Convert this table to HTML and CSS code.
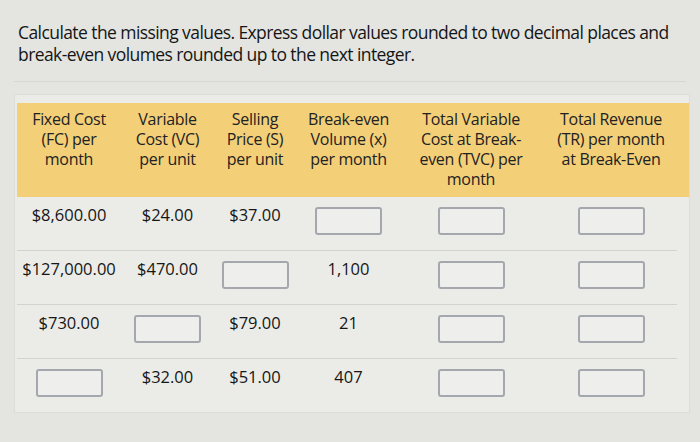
FILE: index.html
```html
<!DOCTYPE html>
<html>
<head>
<meta charset="utf-8">
<link rel="stylesheet" href="styles.css">
</head>
<body>
<div class="page">
  <p class="intro">Calculate the missing values. Express dollar values rounded to two decimal places and break-even volumes rounded up to the next integer.</p>
  <div class="rule"></div>
  <div class="panel">
    <div class="grid head">
      <div class="hc">Fixed Cost<br>(FC) per<br>month</div>
      <div class="hc">Variable<br>Cost (VC)<br>per unit</div>
      <div class="hc">Selling<br>Price (S)<br>per unit</div>
      <div class="hc">Break-even<br>Volume (x)<br>per month</div>
      <div class="hc">Total Variable<br>Cost at Break-<br>even (TVC) per<br>month</div>
      <div class="hc">Total Revenue<br>(TR) per month<br>at Break-Even</div>
    </div>
    <div class="grid row">
      <div class="c">$8,600.00</div>
      <div class="c">$24.00</div>
      <div class="c">$37.00</div>
      <div class="c"><input class="box" type="text"></div>
      <div class="c"><input class="box" type="text"></div>
      <div class="c"><input class="box" type="text"></div>
    </div>
    <div class="grid row">
      <div class="c">$127,000.00</div>
      <div class="c">$470.00</div>
      <div class="c"><input class="box" type="text"></div>
      <div class="c">1,100</div>
      <div class="c"><input class="box" type="text"></div>
      <div class="c"><input class="box" type="text"></div>
    </div>
    <div class="grid row">
      <div class="c">$730.00</div>
      <div class="c"><input class="box" type="text"></div>
      <div class="c">$79.00</div>
      <div class="c">21</div>
      <div class="c"><input class="box" type="text"></div>
      <div class="c"><input class="box" type="text"></div>
    </div>
    <div class="grid row last">
      <div class="c"><input class="box" type="text"></div>
      <div class="c">$32.00</div>
      <div class="c">$51.00</div>
      <div class="c">407</div>
      <div class="c"><input class="box" type="text"></div>
      <div class="c"><input class="box" type="text"></div>
    </div>
  </div>
</div>
</body>
</html>
```
FILE: styles.css
```css
html, body {
  margin: 0;
  padding: 0;
}
body {
  background: #e4e5e1;
  font-family: "Open Sans", "Noto Sans", sans-serif;
  color: #1a1a1a;
  width: 700px;
  height: 442px;
  overflow: hidden;
}
.page {
  padding: 21px 0 0 18px;
}
.intro {
  margin: 0;
  width: 670px;
  font-size: 17.5px;
  line-height: 22px;
  letter-spacing: -0.58px;
  color: #151515;
}
.rule {
  margin: 16px 14px 0 -4px;
  height: 1px;
  background: #d6d7d3;
}
.panel {
  margin: 12px 0 0 -4px;
  width: 672px;
  background: #ebece8;
  border: 1px solid #dcddd9;
  padding: 8px 0 0 2px;
}
.grid {
  display: grid;
  grid-template-columns: 104px 93px 82px 105px 140px 140px;
}
.head {
  background: #f3cf78;
  padding: 6px 0 8px;
}
.hc {
  text-align: center;
  font-size: 16px;
  line-height: 20px;
  letter-spacing: -0.3px;
  color: #222;
}
.row {
  height: 53px;
  border-bottom: 1px solid #d2d3cf;
  width: 660px;
}
.row.last {
  border-bottom: none;
}
.c {
  text-align: center;
  font-size: 16.5px;
  line-height: 22px;
  padding-top: 7px;
  color: #161616;
}
.box {
  display: block;
  margin: 3px auto 0;
  width: 67px;
  height: 28px;
  box-sizing: border-box;
  border: 2px solid #a4a8ae;
  border-radius: 3px;
  background: #eeefec;
  padding: 0;
}
```
